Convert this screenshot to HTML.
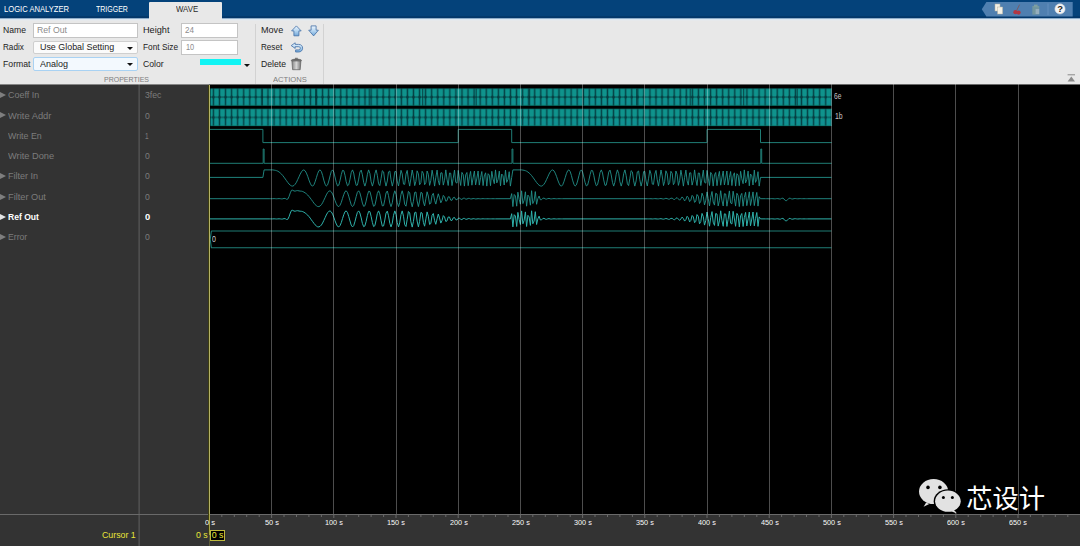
<!DOCTYPE html>
<html lang="en">
<head>
<meta charset="utf-8">
<title>Logic Analyzer</title>
<style>
*{box-sizing:border-box;margin:0;padding:0}
html,body{width:1080px;height:546px;overflow:hidden;background:#000}
body{position:relative;font-family:"Liberation Sans","Noto Sans CJK SC",sans-serif;font-size:9px;color:#1a1a1a}
.abs{position:absolute}
.t{position:absolute;line-height:1em;white-space:nowrap;transform-origin:0 50%;display:block}
.tri{position:absolute;left:0;width:0;height:0;border-top:3.3px solid transparent;border-bottom:3.3px solid transparent;border-left:6.2px solid #7e7e7e}
#topbar{left:0;top:0;width:1080px;height:18px;background:linear-gradient(#04427a 0,#04427a 16px,#033a6c 16px,#03366a 18px)}
#tabwave{left:149px;top:2px;width:73px;height:19px;background:#e8e8e8;color:#222;text-align:center;line-height:14px;border-radius:1px 1px 0 0}
#strip{left:0;top:18px;width:1080px;height:66px;background:linear-gradient(#8fadc9 0,#8fadc9 1px,#dde8f2 1px,#dde8f2 2px,#e6e9ec 2px,#e6e9ec 3px,#e8e8e8 3px)}
#edge{left:0;top:84px;width:1080px;height:1px;background:rgba(232,232,232,0.45)}
.inp{position:absolute;height:15px;background:#fff;border:1px solid #c4c4c4;font-size:9px;line-height:13px;color:#8a8a8a;padding-left:3px;white-space:nowrap}
.sel{position:absolute;height:14px;background:#fbfbfb;border:1px solid #cfcfcf;border-radius:2px;font-size:9px;line-height:12px;color:#1c1c1c;padding-left:6px;white-space:nowrap}
.sel.focus{border-color:#a9d2f3;background:#f3f9fe}
.caret{position:absolute;width:0;height:0;border-left:3px solid transparent;border-right:3px solid transparent;border-top:3px solid #111}
.vsep{position:absolute;top:24px;width:1px;height:60px;background:#d2d2d2}
#left{left:0;top:84px;width:209px;height:462px;background:#333}
#vdiv{left:138px;top:84px;width:2px;height:462px;background:linear-gradient(90deg,#454545 50%,#4e4e4e 50%)}
#axis{left:209px;top:514px;width:871px;height:32px;background:#333}
#hline{left:0;top:514px;width:1080px;height:1px;background:#6a6a6a}
.yl{position:absolute;font-size:8.8px;line-height:10px;color:#e9e638;white-space:nowrap}
#cbox{left:210px;top:529.5px;width:15px;height:11px;border:1px solid #bdb93c;background:#000;color:#e9e638;font-size:8.8px;line-height:9px;text-align:center;white-space:nowrap}
#wm{left:966.2px;top:484px;font-size:26.3px;line-height:30px;color:#fff;white-space:nowrap;font-family:"Liberation Sans","Noto Sans CJK SC",sans-serif}
</style>
</head>
<body>
<div id="topbar" class="abs"></div>

<div id="strip" class="abs"></div>
<div id="tabwave" class="abs"></div>
<div class="inp" style="left:33px;top:23px;width:105px"></div>
<div class="sel" style="left:33px;top:40.5px;width:105px;height:13.5px"><span class="caret" style="left:93px;top:5px"></span></div>
<div class="sel focus" style="left:33px;top:56.6px;width:105px;height:14.8px"><span class="caret" style="left:93px;top:5px"></span></div>
<div class="inp" style="left:181px;top:23px;width:57px"></div>
<div class="inp" style="left:181px;top:40px;width:57px"></div>
<div class="abs" style="left:200px;top:59px;width:41px;height:6px;background:#10f4f4"></div>
<div class="caret" style="left:244px;top:64px"></div>
<div class="vsep" style="left:255px"></div>
<div class="vsep" style="left:323px"></div>
<svg class="abs" style="left:286px;top:20px" width="40" height="55" viewBox="286 20 40 55">
<defs>
<linearGradient id="gb" x1="0" y1="0" x2="0" y2="1"><stop offset="0" stop-color="#eff6fd"/><stop offset="0.5" stop-color="#b6d6f1"/><stop offset="1" stop-color="#6fa6d8"/></linearGradient>
<linearGradient id="gt" x1="0" y1="0" x2="1" y2="0"><stop offset="0" stop-color="#858585"/><stop offset="0.5" stop-color="#d6d6d6"/><stop offset="1" stop-color="#767676"/></linearGradient>
</defs>
<path d="M296.4 25.9L301.2 30.9H298.9V35.8H293.9V30.9H291.6Z" fill="url(#gb)" stroke="#416fa6" stroke-width="0.8" stroke-linejoin="round"/>
<path d="M313.6 35.9L308.7 30.2H311.1V25.9H316.1V30.2H318.4Z" fill="url(#gb)" stroke="#416fa6" stroke-width="0.8" stroke-linejoin="round"/>
<path d="M291.2 45.6L295.2 42.8V44.4H298.6C301.4 44.4 302.6 46.2 302.6 48.2C302.6 50.4 301 52 298.6 52H295.6V49.9H298.3C299.6 49.9 300.3 49.2 300.3 48.2C300.3 47.2 299.6 46.7 298.3 46.7H295.2V48.4Z" fill="url(#gb)" stroke="#416fa6" stroke-width="0.8" stroke-linejoin="round"/>
<path d="M291.9 60.9H300.9L300.2 69.7H292.6Z" fill="url(#gt)" stroke="#5e5e5e" stroke-width="0.7" stroke-linejoin="round"/>
<path d="M291.2 60.6C291.2 58.6 301.6 58.6 301.6 60.6Z" fill="#6f6f6f" stroke="#555" stroke-width="0.6"/>
<rect x="295" y="57.8" width="2.8" height="1" fill="#666"/>
</svg>


<div id="left" class="abs"></div>
<i class="tri" style="top:92.0px;border-left-color:#7e7e7e"></i>
<i class="tri" style="top:112.4px;border-left-color:#7e7e7e"></i>
<i class="tri" style="top:173.2px;border-left-color:#7e7e7e"></i>
<i class="tri" style="top:193.5px;border-left-color:#7e7e7e"></i>
<i class="tri" style="top:213.8px;border-left-color:#e4e4e4"></i>
<i class="tri" style="top:234.1px;border-left-color:#7e7e7e"></i>
<div id="vdiv" class="abs"></div>
<span class="t" style="left:3.90px;top:4.87px;font-size:8.90px;color:#ffffff;transform:scaleX(0.8591)">LOGIC ANALYZER</span>
<span class="t" style="left:96.30px;top:4.87px;font-size:8.90px;color:#ffffff;transform:scaleX(0.7892)">TRIGGER</span>
<span class="t" style="left:175.70px;top:4.87px;font-size:8.90px;color:#2a2a2a;transform:scaleX(0.8841)">WAVE</span>
<span class="t" style="left:3.00px;top:26.03px;font-size:9.30px;color:#1c1c1c;transform:scaleX(0.9270)">Name</span>
<span class="t" style="left:3.00px;top:43.03px;font-size:9.30px;color:#1c1c1c;transform:scaleX(0.8747)">Radix</span>
<span class="t" style="left:3.00px;top:60.23px;font-size:9.30px;color:#1c1c1c;transform:scaleX(0.9337)">Format</span>
<span class="t" style="left:37.20px;top:26.03px;font-size:9.30px;color:#8c8c8c;transform:scaleX(0.9361)">Ref Out</span>
<span class="t" style="left:40.00px;top:43.03px;font-size:9.30px;color:#1c1c1c;transform:scaleX(0.9569)">Use Global Setting</span>
<span class="t" style="left:40.00px;top:60.23px;font-size:9.30px;color:#1c1c1c;transform:scaleX(0.9668)">Analog</span>
<span class="t" style="left:143.00px;top:26.03px;font-size:9.30px;color:#1c1c1c;transform:scaleX(0.9856)">Height</span>
<span class="t" style="left:143.00px;top:43.03px;font-size:9.30px;color:#1c1c1c;transform:scaleX(0.8910)">Font Size</span>
<span class="t" style="left:143.00px;top:60.23px;font-size:9.30px;color:#1c1c1c;transform:scaleX(0.9313)">Color</span>
<span class="t" style="left:185.20px;top:26.03px;font-size:9.30px;color:#8c8c8c;transform:scaleX(0.8703)">24</span>
<span class="t" style="left:185.60px;top:43.03px;font-size:9.30px;color:#8c8c8c;transform:scaleX(0.7929)">10</span>
<span class="t" style="left:103.70px;top:75.72px;font-size:7.90px;color:#7d7d7d;transform:scaleX(0.8881)">PROPERTIES</span>
<span class="t" style="left:260.80px;top:26.03px;font-size:9.30px;color:#1c1c1c;transform:scaleX(0.9763)">Move</span>
<span class="t" style="left:260.80px;top:43.03px;font-size:9.30px;color:#1c1c1c;transform:scaleX(0.8727)">Reset</span>
<span class="t" style="left:260.80px;top:60.23px;font-size:9.30px;color:#1c1c1c;transform:scaleX(0.9298)">Delete</span>
<span class="t" style="left:272.80px;top:75.72px;font-size:7.90px;color:#7d7d7d;transform:scaleX(0.9654)">ACTIONS</span>
<span class="t" style="left:7.90px;top:91.29px;font-size:9.00px;color:#7c7c7c;transform:scaleX(0.9982)">Coeff In</span>
<span class="t" style="left:145.00px;top:91.29px;font-size:9.00px;color:#7c7c7c;transform:scaleX(0.9641)">3fec</span>
<span class="t" style="left:7.90px;top:111.69px;font-size:9.00px;color:#7c7c7c;transform:scaleX(1.0370)">Write Addr</span>
<span class="t" style="left:145.00px;top:111.69px;font-size:9.00px;color:#7c7c7c;transform:scaleX(0.9592)">0</span>
<span class="t" style="left:7.90px;top:131.69px;font-size:9.00px;color:#7c7c7c;transform:scaleX(0.9842)">Write En</span>
<span class="t" style="left:145.00px;top:131.69px;font-size:9.00px;color:#7c7c7c;transform:scaleX(0.7194)">1</span>
<span class="t" style="left:7.90px;top:151.99px;font-size:9.00px;color:#7c7c7c;transform:scaleX(1.0279)">Write Done</span>
<span class="t" style="left:145.00px;top:151.99px;font-size:9.00px;color:#7c7c7c;transform:scaleX(0.9592)">0</span>
<span class="t" style="left:7.90px;top:172.49px;font-size:9.00px;color:#7c7c7c;transform:scaleX(1.0031)">Filter In</span>
<span class="t" style="left:145.00px;top:172.49px;font-size:9.00px;color:#7c7c7c;transform:scaleX(0.9592)">0</span>
<span class="t" style="left:7.90px;top:192.79px;font-size:9.00px;color:#7c7c7c;transform:scaleX(1.0241)">Filter Out</span>
<span class="t" style="left:145.00px;top:192.79px;font-size:9.00px;color:#7c7c7c;transform:scaleX(0.9592)">0</span>
<span class="t" style="left:7.90px;top:213.09px;font-size:9.00px;color:#ffffff;transform:scaleX(0.9508);font-weight:bold">Ref Out</span>
<span class="t" style="left:145.00px;top:213.09px;font-size:9.00px;color:#ffffff;transform:scaleX(1.0392);font-weight:bold">0</span>
<span class="t" style="left:7.90px;top:233.39px;font-size:9.00px;color:#7c7c7c;transform:scaleX(0.9601)">Error</span>
<span class="t" style="left:145.00px;top:233.39px;font-size:9.00px;color:#7c7c7c;transform:scaleX(0.9592)">0</span>

<div id="axis" class="abs"></div>
<div id="hline" class="abs"></div>
<svg class="abs" style="left:0;top:0" width="1080" height="546" viewBox="0 0 1080 546">
<defs><pattern id="bus" x="210.4" y="0" width="6.0625" height="17.4" patternUnits="userSpaceOnUse"><rect width="6.0625" height="17.4" fill="#0f938c"/><rect y="12.2" width="6.0625" height="3.2" fill="#1284a0" opacity="0.28"/><rect x="2.3" width="1.45" height="17.4" fill="#064346"/><rect y="7.9" width="6.0625" height="1.6" fill="#075659" opacity="0.8"/><path d="M3 6.2L4.5 8.7L3 11.2L1.5 8.7Z" fill="#053a3d" opacity="0.9"/><rect y="0" width="6.0625" height="0.8" fill="#0a6764" opacity="0.7"/><rect y="16.6" width="6.0625" height="0.8" fill="#0a6764" opacity="0.7"/></pattern></defs>
<g transform="translate(0 88.4)"><rect x="210.4" y="0" width="621.6" height="17.4" fill="url(#bus)"/></g>
<g transform="translate(0 108.7)"><rect x="210.4" y="0" width="621.6" height="17.4" fill="url(#bus)"/></g>
<rect x="261.7" y="88.6" width="1" height="17" fill="#042a2c" opacity="0.75"/>
<rect x="315.2" y="88.6" width="1" height="17" fill="#042a2c" opacity="0.75"/>
<rect x="368.7" y="88.6" width="1" height="17" fill="#042a2c" opacity="0.75"/>
<rect x="422.2" y="88.6" width="1" height="17" fill="#042a2c" opacity="0.75"/>
<rect x="475.7" y="88.6" width="1" height="17" fill="#042a2c" opacity="0.75"/>
<rect x="529.2" y="88.6" width="1" height="17" fill="#042a2c" opacity="0.75"/>
<rect x="582.7" y="88.6" width="1" height="17" fill="#042a2c" opacity="0.75"/>
<rect x="636.2" y="88.6" width="1" height="17" fill="#042a2c" opacity="0.75"/>
<rect x="689.7" y="88.6" width="1" height="17" fill="#042a2c" opacity="0.75"/>
<rect x="743.2" y="88.6" width="1" height="17" fill="#042a2c" opacity="0.75"/>
<rect x="796.7" y="88.6" width="1" height="17" fill="#042a2c" opacity="0.75"/>
<g fill="none" stroke-linejoin="round">
<path d="M209.4 129.4L262.9 129.4L262.9 142.6L458.2 142.6L458.2 129.4L511.7 129.4L511.7 142.6L707 142.6L707 129.4L760.5 129.4L760.5 142.6L831.6 142.6" stroke="#1f7d75" stroke-width="1"/>
<path d="M209.4 163.3L263.2 163.3L263.2 149L264.1 149L264.1 163.3L512 163.3L512 149L512.9 149L512.9 163.3L760.8 163.3L760.8 149L761.7 149L761.7 163.3L831.6 163.3" stroke="#1f7d75" stroke-width="1"/>
<path d="M209.4 177.4L262.9 177.4L264.1 169.9L271.6 169.9L272.8 169.9L274.1 170.1L275.3 170.3L276.6 170.7L277.8 171.2L279.1 172L280.3 173L281.6 174.2L282.8 175.6L284 177.2L285.3 179L286.5 180.7L287.8 182.5L289 184L290.3 185.2L291.5 185.9L292.7 186.1L294 185.5L295.2 184.2L296.5 182.2L297.7 179.6L299 176.8L300.2 174.1L301.5 171.8L302.7 170.3L303.9 169.9L305.2 170.9L306.4 173.1L307.7 176.3L308.9 179.9L310.2 183.2L311.4 185.5L312.7 186.1L313.9 184.8L315.1 181.8L316.4 177.7L317.6 173.7L318.9 170.7L320.1 169.9L321.4 171.6L322.6 175.4L323.8 180.2L325.1 184.2L326.3 186.1L327.6 184.9L328.8 181L330.1 175.8L331.3 171.4L332.6 169.9L333.8 172.1L335 177L336.3 182.5L337.5 185.9L338.8 185.1L340 180.6L341.3 174.6L342.5 170.4L343.8 170.7L345 175.3L346.2 181.7L347.5 185.8L348.7 184.8L350 179.2L351.2 172.7L352.5 169.9L353.7 173L354.9 179.9L356.2 185.4L357.4 185.1L358.7 179.1L359.9 172.1L361.2 170.1L362.4 174.9L363.7 182.5L364.9 186.1L366.1 182.2L367.4 174.3L368.6 169.9L369.9 173.5L371.1 181.7L372.4 186.1L373.6 182L374.9 173.6L376.1 169.9L377.3 175.3L378.6 183.8L379.8 185.6L381.1 178.4L382.3 170.7L383.6 171.9L384.8 180.8L386 186.1L387.3 181L388.5 171.9L389.8 171L391 179.7L392.3 186.1L393.5 181.1L394.8 171.6L396 171.5L397.2 181L398.5 186L399.7 178.8L401 170.3L402.2 173.9L403.5 184.1L404.7 184.4L406 174.1L407.2 170.4L408.4 179.6L409.7 186.1L410.9 178.5L412.2 170L413.4 175.9L414.7 185.6L415.9 181.3L417.1 170.8L418.4 173.9L419.6 184.8L420.9 182.5L422.1 171.3L423.4 173.4L424.6 184.7L425.9 182.4L427.1 171L428.3 174.3L429.6 185.4L430.8 180.7L432.1 170.2L433.3 176.7L434.6 186.1L435.8 177.4L437.1 170.1L438.3 180.8L439.5 185.1L440.8 172.9L442 172.8L443.3 185.1L444.5 180.4L445.8 169.9L447 179.3L448.2 185.5L449.5 173L450.7 173.2L452 185.6L453.2 178.5L454.5 170.1L455.7 182.3L457 183.1L458.2 170.4L459.4 178.1L460.7 185.5L461.9 172.4L463.2 174.7L464.4 186.1L465.7 174.8L466.9 172.5L468.2 185.7L469.4 176.8L470.6 171.4L471.9 185.2L473.1 177.9L474.4 171L475.6 184.9L476.9 178.1L478.1 171L479.3 185.1L480.6 177.5L481.8 171.5L483.1 185.6L484.3 175.9L485.6 172.8L486.8 186.1L488.1 173.7L489.3 175.1L490.5 185.7L491.8 171.3L493 178.7L494.3 183.7L495.5 169.9L496.8 182.9L498 179.6L499.3 171.1L500.5 185.8L501.7 174L503 175.8L504.2 185L505.5 170.1L506.7 182.4L508 179.3L509.2 171.7L510.4 186.1L511.7 177.4L512.9 169.9L520.4 169.9L521.6 169.9L522.9 170.1L524.1 170.3L525.4 170.7L526.6 171.2L527.9 172L529.1 173L530.4 174.2L531.6 175.6L532.8 177.2L534.1 179L535.3 180.7L536.6 182.5L537.8 184L539.1 185.2L540.3 185.9L541.5 186.1L542.8 185.5L544 184.2L545.3 182.2L546.5 179.6L547.8 176.8L549 174.1L550.3 171.8L551.5 170.3L552.7 169.9L554 170.9L555.2 173.1L556.5 176.3L557.7 179.9L559 183.2L560.2 185.5L561.5 186.1L562.7 184.8L563.9 181.8L565.2 177.7L566.4 173.7L567.7 170.7L568.9 169.9L570.2 171.6L571.4 175.4L572.6 180.2L573.9 184.2L575.1 186.1L576.4 184.9L577.6 181L578.9 175.8L580.1 171.4L581.4 169.9L582.6 172.1L583.8 177L585.1 182.5L586.3 185.9L587.6 185.1L588.8 180.6L590.1 174.6L591.3 170.4L592.6 170.7L593.8 175.3L595 181.7L596.3 185.8L597.5 184.8L598.8 179.2L600 172.7L601.3 169.9L602.5 173L603.7 179.9L605 185.4L606.2 185.1L607.5 179.1L608.7 172.1L610 170.1L611.2 174.9L612.5 182.5L613.7 186.1L614.9 182.2L616.2 174.3L617.4 169.9L618.7 173.5L619.9 181.7L621.2 186.1L622.4 182L623.7 173.6L624.9 169.9L626.1 175.3L627.4 183.8L628.6 185.6L629.9 178.4L631.1 170.7L632.4 171.9L633.6 180.8L634.8 186.1L636.1 181L637.3 171.9L638.6 171L639.8 179.7L641.1 186.1L642.3 181.1L643.6 171.6L644.8 171.5L646 181L647.3 186L648.5 178.8L649.8 170.3L651 173.9L652.3 184.1L653.5 184.4L654.8 174.1L656 170.4L657.2 179.6L658.5 186.1L659.7 178.5L661 170L662.2 175.9L663.5 185.6L664.7 181.3L665.9 170.8L667.2 173.9L668.4 184.8L669.7 182.5L670.9 171.3L672.2 173.4L673.4 184.7L674.7 182.4L675.9 171L677.1 174.3L678.4 185.4L679.6 180.7L680.9 170.2L682.1 176.7L683.4 186.1L684.6 177.4L685.9 170.1L687.1 180.8L688.3 185.1L689.6 172.9L690.8 172.8L692.1 185.1L693.3 180.4L694.6 169.9L695.8 179.3L697 185.5L698.3 173L699.5 173.2L700.8 185.6L702 178.5L703.3 170.1L704.5 182.3L705.8 183.1L707 170.4L708.2 178.1L709.5 185.5L710.7 172.4L712 174.7L713.2 186.1L714.5 174.8L715.7 172.5L717 185.7L718.2 176.8L719.4 171.4L720.7 185.2L721.9 177.9L723.2 171L724.4 184.9L725.7 178.1L726.9 171L728.1 185.1L729.4 177.5L730.6 171.5L731.9 185.6L733.1 175.9L734.4 172.8L735.6 186.1L736.9 173.7L738.1 175.1L739.3 185.7L740.6 171.3L741.8 178.7L743.1 183.7L744.3 169.9L745.6 182.9L746.8 179.6L748.1 171.1L749.3 185.8L750.5 174L751.8 175.8L753 185L754.3 170.1L755.5 182.4L756.8 179.3L758 171.7L759.2 186.1L760.5 177.4L831.4 177.4" stroke="#23918a" stroke-width="0.9"/>
<path d="M209.4 198.7L269.1 198.7L270.4 198.7L271.6 198.7L272.8 198.7L274.1 198.6L275.3 198.7L276.6 198.8L277.8 198.7L279.1 198.6L280.3 198.7L281.6 198.9L282.8 198.8L284 198.4L285.3 198.5L286.5 199.3L287.8 199.1L289 196.6L290.3 192.8L291.5 190.3L292.7 190.2L294 191L295.2 191.1L296.5 190.7L297.7 190.6L299 190.9L300.2 191.1L301.5 191.2L302.7 191.5L303.9 192.1L305.2 192.9L306.4 193.8L307.7 195L308.9 196.4L310.2 198L311.4 199.6L312.7 201.4L313.9 203.1L315.1 204.6L316.4 205.7L317.6 206.5L318.9 206.6L320.1 206L321.4 204.7L322.6 202.8L323.8 200.3L325.1 197.6L326.3 194.9L327.6 192.6L328.8 191.2L330.1 190.8L331.3 191.8L332.6 194L333.8 197.1L335 200.6L336.3 203.8L337.5 206L338.8 206.6L340 205.3L341.3 202.4L342.5 198.4L343.8 194.5L345 191.6L346.2 190.8L347.5 192.5L348.7 196.2L350 200.8L351.2 204.8L352.5 206.6L353.7 205.4L354.9 201.6L356.2 196.5L357.4 192.3L358.7 190.8L359.9 192.9L361.2 197.8L362.4 203.1L363.7 206.4L364.9 205.7L366.1 201.2L367.4 195.3L368.6 191.3L369.9 191.5L371.1 196.1L372.4 202.3L373.6 206.3L374.9 205.4L376.1 199.9L377.3 193.5L378.6 190.8L379.8 193.8L381.1 200.5L382.3 205.9L383.6 205.6L384.8 199.8L386 193L387.3 191L388.5 195.6L389.8 203.1L391 206.6L392.3 202.8L393.5 195.1L394.8 190.8L396 194.3L397.2 202.2L398.5 206.6L399.7 202.7L401 194.4L402.2 190.8L403.5 196L404.7 204.4L406 206.2L407.2 199.1L408.4 191.4L409.7 192.7L410.9 201.6L412.2 206.8L413.4 201.4L414.7 192.4L415.9 192L417.1 200.8L418.4 206.6L419.6 201.1L420.9 192.3L422.1 193L423.4 202.1L424.6 205.9L425.9 198.6L427.1 191.8L428.3 196L429.6 204.2L430.8 203.2L432.1 195.1L433.3 193.3L434.6 200.4L435.8 204.1L437.1 198.5L438.3 193.8L439.5 197.7L440.8 202.8L442 200.3L443.3 195.4L444.5 196.8L445.8 201.2L447 200.7L448.2 196.8L449.5 196.9L450.7 200.1L452 200.3L453.2 197.7L454.5 197.3L455.7 199.5L457 199.8L458.2 198.1L459.4 197.8L460.7 199.2L461.9 199.4L463.2 198.3L464.4 198.2L465.7 199L466.9 199.1L468.2 198.4L469.4 198.4L470.6 198.9L471.9 198.9L473.1 198.5L474.4 198.6L475.6 198.9L476.9 198.8L478.1 198.6L479.3 198.7L480.6 198.8L481.8 198.7L483.1 198.6L484.3 198.7L485.6 198.7L486.8 198.7L488.1 198.7L489.3 198.7L490.5 198.7L491.8 198.7L493 198.7L494.3 198.7L495.5 198.7L510.4 198.7L511.7 193.6L512.9 206.6L514.2 194.5L515.4 195.9L516.7 206.2L517.9 192.2L519.2 199.4L520.4 204.2L521.6 190.8L522.9 203.6L524.1 200.3L525.4 191.8L526.6 206.2L527.9 195.1L529.1 196.8L530.4 205.2L531.6 190.7L532.8 203.6L534.1 200.8L535.3 191.6L536.6 204.3L537.8 198.7L539.1 196L540.3 199.7L541.5 199.7L542.8 198.3L544 198.1L545.3 198.9L546.5 199.1L547.8 198.6L549 198.4L550.3 198.8L551.5 198.9L552.7 198.7L554 198.6L555.2 198.7L556.5 198.8L557.7 198.7L559 198.7L560.2 198.7L561.5 198.7L562.7 198.7L643.6 198.7L644.8 198.7L646 198.7L647.3 198.7L648.5 198.7L649.8 198.7L651 198.7L652.3 198.8L653.5 198.7L654.8 198.6L656 198.7L657.2 198.8L658.5 198.8L659.7 198.6L661 198.5L662.2 198.8L663.5 199L664.7 198.7L665.9 198.3L667.2 198.6L668.4 199.1L669.7 199L670.9 198.2L672.2 198.2L673.4 199.2L674.7 199.5L675.9 198.3L677.1 197.6L678.4 198.9L679.6 200.2L680.9 198.7L682.1 196.9L683.4 198.4L684.6 200.9L685.9 199.4L687.1 196.2L688.3 197.5L689.6 201.6L690.8 200.3L692.1 195.4L693.3 196.7L694.6 202.4L695.8 201.1L697 194.5L698.3 196.2L699.5 203.5L700.8 201.2L702 193.2L703.3 196.5L704.5 204.9L705.8 200.2L707 191.9L708.2 198.4L709.5 205.9L710.7 197.4L712 191.5L713.2 202L714.5 205.1L715.7 193.3L717 194L718.2 205.9L719.4 200.7L720.7 190.7L721.9 200.2L723.2 206L724.4 193.7L725.7 194L726.9 206.2L728.1 199.2L729.4 190.9L730.6 202.9L731.9 203.7L733.1 191.2L734.4 198.8L735.6 206.1L736.9 193.3L738.1 195.5L739.3 206.6L740.6 195.6L741.8 193.4L743.1 206.2L744.3 197.5L745.6 192.3L746.8 205.7L748.1 198.6L749.3 191.8L750.5 205.5L751.8 198.8L753 191.9L754.3 205.6L755.5 198.2L756.8 192.4L758 206.1L759.2 196.7L760.5 198.7L765.5 198.7L766.7 198.7L768 198.7L769.2 198.8L770.4 198.7L771.7 198.6L772.9 198.7L774.2 198.8L775.4 198.8L776.7 198.6L777.9 198.6L779.2 198.9L780.4 199L781.6 198.4L782.9 198.2L784.1 199.1L785.4 200.6L786.6 200.7L787.9 199.4L789.1 198.2L790.3 198.3L791.6 198.9L792.8 199L794.1 198.6L795.3 198.5L796.6 198.7L797.8 198.8L799.1 198.7L800.3 198.6L801.5 198.7L802.8 198.7L804 198.7L805.3 198.7L806.5 198.7L807.8 198.7L831.4 198.7" stroke="#23918a" stroke-width="0.9"/>
<path d="M209.4 218.9L269.1 218.9L270.4 218.9L271.6 218.9L272.8 218.9L274.1 218.8L275.3 218.9L276.6 219L277.8 218.9L279.1 218.8L280.3 218.9L281.6 219.1L282.8 219L284 218.6L285.3 218.7L286.5 219.5L287.8 219.3L289 216.8L290.3 213L291.5 210.4L292.7 210.3L294 211.1L295.2 211.2L296.5 210.8L297.7 210.7L299 211L300.2 211.2L301.5 211.3L302.7 211.6L303.9 212.2L305.2 213L306.4 214L307.7 215.1L308.9 216.5L310.2 218.1L311.4 219.9L312.7 221.6L313.9 223.3L315.1 224.8L316.4 226L317.6 226.8L318.9 226.9L320.1 226.3L321.4 225L322.6 223L323.8 220.5L325.1 217.7L326.3 215L327.6 212.7L328.8 211.3L330.1 210.9L331.3 211.9L332.6 214.1L333.8 217.2L335 220.8L336.3 224L337.5 226.3L338.8 226.9L340 225.6L341.3 222.6L342.5 218.6L343.8 214.6L345 211.7L346.2 210.9L347.5 212.6L348.7 216.4L350 221L351.2 225.1L352.5 226.9L353.7 225.7L354.9 221.8L356.2 216.7L357.4 212.4L358.7 210.9L359.9 213L361.2 217.9L362.4 223.4L363.7 226.7L364.9 225.9L366.1 221.5L367.4 215.5L368.6 211.4L369.9 211.6L371.1 216.3L372.4 222.6L373.6 226.6L374.9 225.6L376.1 220.1L377.3 213.7L378.6 210.9L379.8 214L381.1 220.8L382.3 226.2L383.6 225.9L384.8 220L386 213.1L387.3 211.1L388.5 215.8L389.8 223.3L391 226.9L392.3 223.1L393.5 215.3L394.8 210.9L396 214.4L397.2 222.5L398.5 226.9L399.7 222.9L401 214.6L402.2 210.9L403.5 216.2L404.7 224.7L406 226.5L407.2 219.3L408.4 211.5L409.7 212.9L410.9 221.8L412.2 227.1L413.4 221.6L414.7 212.6L415.9 212.1L417.1 221L418.4 226.9L419.6 221.4L420.9 212.4L422.1 213.1L423.4 222.4L424.6 226.2L425.9 218.8L427.1 211.9L428.3 216.2L429.6 224.5L430.8 223.5L432.1 215.2L433.3 213.5L434.6 220.6L435.8 224.3L437.1 218.7L438.3 214L439.5 217.9L440.8 223.1L442 220.6L443.3 215.6L444.5 216.9L445.8 221.5L447 220.9L448.2 217L449.5 217L450.7 220.3L452 220.5L453.2 217.9L454.5 217.5L455.7 219.7L457 220L458.2 218.3L459.4 218L460.7 219.4L461.9 219.6L463.2 218.5L464.4 218.4L465.7 219.2L466.9 219.3L468.2 218.6L469.4 218.6L470.6 219.1L471.9 219.1L473.1 218.7L474.4 218.8L475.6 219.1L476.9 219L478.1 218.8L479.3 218.9L480.6 219L481.8 218.9L483.1 218.8L484.3 218.9L485.6 218.9L486.8 218.9L488.1 218.9L489.3 218.9L490.5 218.9L491.8 218.9L493 218.9L494.3 218.9L495.5 218.9L510.4 218.9L511.7 213.7L512.9 226.9L514.2 214.7L515.4 216L516.7 226.5L517.9 212.4L519.2 219.6L520.4 224.5L521.6 210.9L522.9 223.8L524.1 220.5L525.4 211.9L526.6 226.5L527.9 215.3L529.1 216.9L530.4 225.4L531.6 210.8L532.8 223.8L534.1 221L535.3 211.7L536.6 224.5L537.8 218.9L539.1 216.1L540.3 219.9L541.5 219.9L542.8 218.5L544 218.3L545.3 219.1L546.5 219.3L547.8 218.8L549 218.6L550.3 219L551.5 219.1L552.7 218.9L554 218.8L555.2 218.9L556.5 219L557.7 218.9L559 218.9L560.2 218.9L561.5 218.9L562.7 218.9L643.6 218.9L644.8 218.9L646 218.9L647.3 218.9L648.5 218.9L649.8 218.9L651 218.9L652.3 219L653.5 218.9L654.8 218.8L656 218.9L657.2 219L658.5 219L659.7 218.8L661 218.7L662.2 219L663.5 219.2L664.7 218.9L665.9 218.5L667.2 218.8L668.4 219.3L669.7 219.2L670.9 218.4L672.2 218.4L673.4 219.4L674.7 219.7L675.9 218.5L677.1 217.8L678.4 219.1L679.6 220.4L680.9 218.9L682.1 217.1L683.4 218.6L684.6 221.1L685.9 219.6L687.1 216.3L688.3 217.7L689.6 221.9L690.8 220.5L692.1 215.5L693.3 216.8L694.6 222.7L695.8 221.3L697 214.6L698.3 216.3L699.5 223.8L700.8 221.5L702 213.4L703.3 216.7L704.5 225.1L705.8 220.4L707 212L708.2 218.6L709.5 226.2L710.7 217.6L712 211.6L713.2 222.2L714.5 225.4L715.7 213.5L717 214.1L718.2 226.1L719.4 220.9L720.7 210.8L721.9 220.4L723.2 226.3L724.4 213.8L725.7 214.1L726.9 226.5L728.1 219.4L729.4 211L730.6 223.2L731.9 224L733.1 211.3L734.4 219L735.6 226.3L736.9 213.4L738.1 215.6L739.3 226.9L740.6 215.8L741.8 213.5L743.1 226.5L744.3 217.7L745.6 212.4L746.8 226L748.1 218.8L749.3 212L750.5 225.8L751.8 219L753 212L754.3 225.9L755.5 218.4L756.8 212.5L758 226.4L759.2 216.9L760.5 218.9L765.5 218.9L766.7 218.9L768 218.9L769.2 219L770.4 218.9L771.7 218.8L772.9 218.9L774.2 219L775.4 219L776.7 218.8L777.9 218.8L779.2 219.1L780.4 219.2L781.6 218.6L782.9 218.4L784.1 219.3L785.4 220.8L786.6 220.9L787.9 219.6L789.1 218.4L790.3 218.5L791.6 219.1L792.8 219.2L794.1 218.8L795.3 218.7L796.6 218.9L797.8 219L799.1 218.9L800.3 218.8L801.5 218.9L802.8 218.9L804 218.9L805.3 218.9L806.5 218.9L807.8 218.9L831.4 218.9" stroke="#2fb3ac" stroke-width="1"/>
<path d="M210.2 239.4L211.4 231H831.4M210.2 239.4L211.4 247.8H831.4" stroke="#1f7d75" stroke-width="1.1"/>
</g>
<rect x="208.9" y="514" width="1" height="4" fill="#6a6a6a"/>
<rect x="221.3" y="514" width="1" height="3" fill="#6a6a6a"/>
<rect x="233.8" y="514" width="1" height="3" fill="#6a6a6a"/>
<rect x="246.2" y="514" width="1" height="3" fill="#6a6a6a"/>
<rect x="258.7" y="514" width="1" height="3" fill="#6a6a6a"/>
<rect x="271.1" y="514" width="1" height="4" fill="#6a6a6a"/>
<rect x="283.5" y="514" width="1" height="3" fill="#6a6a6a"/>
<rect x="296.0" y="514" width="1" height="3" fill="#6a6a6a"/>
<rect x="308.4" y="514" width="1" height="3" fill="#6a6a6a"/>
<rect x="320.9" y="514" width="1" height="3" fill="#6a6a6a"/>
<rect x="333.3" y="514" width="1" height="4" fill="#6a6a6a"/>
<rect x="345.7" y="514" width="1" height="3" fill="#6a6a6a"/>
<rect x="358.2" y="514" width="1" height="3" fill="#6a6a6a"/>
<rect x="370.6" y="514" width="1" height="3" fill="#6a6a6a"/>
<rect x="383.1" y="514" width="1" height="3" fill="#6a6a6a"/>
<rect x="395.5" y="514" width="1" height="4" fill="#6a6a6a"/>
<rect x="407.9" y="514" width="1" height="3" fill="#6a6a6a"/>
<rect x="420.4" y="514" width="1" height="3" fill="#6a6a6a"/>
<rect x="432.8" y="514" width="1" height="3" fill="#6a6a6a"/>
<rect x="445.3" y="514" width="1" height="3" fill="#6a6a6a"/>
<rect x="457.7" y="514" width="1" height="4" fill="#6a6a6a"/>
<rect x="470.1" y="514" width="1" height="3" fill="#6a6a6a"/>
<rect x="482.6" y="514" width="1" height="3" fill="#6a6a6a"/>
<rect x="495.0" y="514" width="1" height="3" fill="#6a6a6a"/>
<rect x="507.5" y="514" width="1" height="3" fill="#6a6a6a"/>
<rect x="519.9" y="514" width="1" height="4" fill="#6a6a6a"/>
<rect x="532.3" y="514" width="1" height="3" fill="#6a6a6a"/>
<rect x="544.8" y="514" width="1" height="3" fill="#6a6a6a"/>
<rect x="557.2" y="514" width="1" height="3" fill="#6a6a6a"/>
<rect x="569.7" y="514" width="1" height="3" fill="#6a6a6a"/>
<rect x="582.1" y="514" width="1" height="4" fill="#6a6a6a"/>
<rect x="594.5" y="514" width="1" height="3" fill="#6a6a6a"/>
<rect x="607.0" y="514" width="1" height="3" fill="#6a6a6a"/>
<rect x="619.4" y="514" width="1" height="3" fill="#6a6a6a"/>
<rect x="631.9" y="514" width="1" height="3" fill="#6a6a6a"/>
<rect x="644.3" y="514" width="1" height="4" fill="#6a6a6a"/>
<rect x="656.7" y="514" width="1" height="3" fill="#6a6a6a"/>
<rect x="669.2" y="514" width="1" height="3" fill="#6a6a6a"/>
<rect x="681.6" y="514" width="1" height="3" fill="#6a6a6a"/>
<rect x="694.1" y="514" width="1" height="3" fill="#6a6a6a"/>
<rect x="706.5" y="514" width="1" height="4" fill="#6a6a6a"/>
<rect x="718.9" y="514" width="1" height="3" fill="#6a6a6a"/>
<rect x="731.4" y="514" width="1" height="3" fill="#6a6a6a"/>
<rect x="743.8" y="514" width="1" height="3" fill="#6a6a6a"/>
<rect x="756.3" y="514" width="1" height="3" fill="#6a6a6a"/>
<rect x="768.7" y="514" width="1" height="4" fill="#6a6a6a"/>
<rect x="781.1" y="514" width="1" height="3" fill="#6a6a6a"/>
<rect x="793.6" y="514" width="1" height="3" fill="#6a6a6a"/>
<rect x="806.0" y="514" width="1" height="3" fill="#6a6a6a"/>
<rect x="818.5" y="514" width="1" height="3" fill="#6a6a6a"/>
<rect x="830.9" y="514" width="1" height="4" fill="#6a6a6a"/>
<rect x="843.3" y="514" width="1" height="3" fill="#6a6a6a"/>
<rect x="855.8" y="514" width="1" height="3" fill="#6a6a6a"/>
<rect x="868.2" y="514" width="1" height="3" fill="#6a6a6a"/>
<rect x="880.7" y="514" width="1" height="3" fill="#6a6a6a"/>
<rect x="893.1" y="514" width="1" height="4" fill="#6a6a6a"/>
<rect x="905.5" y="514" width="1" height="3" fill="#6a6a6a"/>
<rect x="918.0" y="514" width="1" height="3" fill="#6a6a6a"/>
<rect x="930.4" y="514" width="1" height="3" fill="#6a6a6a"/>
<rect x="942.9" y="514" width="1" height="3" fill="#6a6a6a"/>
<rect x="955.3" y="514" width="1" height="4" fill="#6a6a6a"/>
<rect x="967.7" y="514" width="1" height="3" fill="#6a6a6a"/>
<rect x="980.2" y="514" width="1" height="3" fill="#6a6a6a"/>
<rect x="992.6" y="514" width="1" height="3" fill="#6a6a6a"/>
<rect x="1005.1" y="514" width="1" height="3" fill="#6a6a6a"/>
<rect x="1017.5" y="514" width="1" height="4" fill="#6a6a6a"/>
<rect x="1029.9" y="514" width="1" height="3" fill="#6a6a6a"/>
<rect x="1042.4" y="514" width="1" height="3" fill="#6a6a6a"/>
<rect x="1054.8" y="514" width="1" height="3" fill="#6a6a6a"/>
<rect x="1067.3" y="514" width="1" height="3" fill="#6a6a6a"/>
<rect x="271" y="84" width="1" height="430" fill="#fff" fill-opacity="0.3"/>
<rect x="333" y="84" width="1" height="430" fill="#fff" fill-opacity="0.3"/>
<rect x="396" y="84" width="1" height="430" fill="#fff" fill-opacity="0.3"/>
<rect x="458" y="84" width="1" height="430" fill="#fff" fill-opacity="0.3"/>
<rect x="520" y="84" width="1" height="430" fill="#fff" fill-opacity="0.3"/>
<rect x="582" y="84" width="1" height="430" fill="#fff" fill-opacity="0.3"/>
<rect x="644" y="84" width="1" height="430" fill="#fff" fill-opacity="0.3"/>
<rect x="707" y="84" width="1" height="430" fill="#fff" fill-opacity="0.3"/>
<rect x="769" y="84" width="1" height="430" fill="#fff" fill-opacity="0.3"/>
<rect x="831" y="84" width="1" height="430" fill="#fff" fill-opacity="0.3"/>
<rect x="893" y="84" width="1" height="430" fill="#fff" fill-opacity="0.3"/>
<rect x="955" y="84" width="1" height="430" fill="#fff" fill-opacity="0.3"/>
<rect x="1018" y="84" width="1" height="430" fill="#fff" fill-opacity="0.3"/>
<rect x="208" y="85" width="1" height="450" fill="#3d3d10"/>
<rect x="209" y="85" width="1" height="429" fill="#b4b266"/>
<rect x="209" y="514" width="1" height="21" fill="#a8a548"/>
<rect x="209" y="535" width="1" height="11" fill="#5a5936"/>
</svg>
<div id="edge" class="abs"></div>
<span class="t" style="left:204.50px;top:519.12px;font-size:7.90px;color:#fafafa;transform:scaleX(0.9679)">0 s</span>
<span class="t" style="left:264.80px;top:519.12px;font-size:7.90px;color:#fafafa;transform:scaleX(0.9376)">50 s</span>
<span class="t" style="left:325.10px;top:519.12px;font-size:7.90px;color:#fafafa;transform:scaleX(0.9212)">100 s</span>
<span class="t" style="left:387.30px;top:519.12px;font-size:7.90px;color:#fafafa;transform:scaleX(0.9212)">150 s</span>
<span class="t" style="left:449.50px;top:519.12px;font-size:7.90px;color:#fafafa;transform:scaleX(0.9212)">200 s</span>
<span class="t" style="left:511.70px;top:519.12px;font-size:7.90px;color:#fafafa;transform:scaleX(0.9212)">250 s</span>
<span class="t" style="left:573.90px;top:519.12px;font-size:7.90px;color:#fafafa;transform:scaleX(0.9212)">300 s</span>
<span class="t" style="left:636.10px;top:519.12px;font-size:7.90px;color:#fafafa;transform:scaleX(0.9212)">350 s</span>
<span class="t" style="left:698.30px;top:519.12px;font-size:7.90px;color:#fafafa;transform:scaleX(0.9212)">400 s</span>
<span class="t" style="left:760.50px;top:519.12px;font-size:7.90px;color:#fafafa;transform:scaleX(0.9212)">450 s</span>
<span class="t" style="left:822.70px;top:519.12px;font-size:7.90px;color:#fafafa;transform:scaleX(0.9212)">500 s</span>
<span class="t" style="left:884.90px;top:519.12px;font-size:7.90px;color:#fafafa;transform:scaleX(0.9212)">550 s</span>
<span class="t" style="left:947.10px;top:519.12px;font-size:7.90px;color:#fafafa;transform:scaleX(0.9212)">600 s</span>
<span class="t" style="left:1009.30px;top:519.12px;font-size:7.90px;color:#fafafa;transform:scaleX(0.9212)">650 s</span>
<span class="t" style="left:834.40px;top:92.96px;font-size:8.20px;color:#c4c4c4;transform:scaleX(0.8115)">6e</span>
<span class="t" style="left:834.90px;top:113.16px;font-size:8.20px;color:#c4c4c4;transform:scaleX(0.8444)">1b</span>
<span class="t" style="left:212.00px;top:234.82px;font-size:8.60px;color:#d4d4d4;transform:scaleX(0.8156)">0</span>
<div class="yl" style="left:102px;top:529.5px">Cursor 1</div>
<div class="yl" style="left:196px;top:529.5px">0 s</div>
<div id="cbox" class="abs">0 s</div>
<svg class="abs" style="left:915px;top:475px" width="50" height="42" viewBox="915 475 50 42">
<path d="M926.2 502.6L923.6 506.8L929.2 503.9Z" fill="#e2e2e2"/>
<ellipse cx="933.6" cy="491.6" rx="14.6" ry="12.5" fill="#e2e2e2"/>
<ellipse cx="947.9" cy="501.2" rx="14.2" ry="12" fill="#000"/>
<path d="M953.4 509.6L957 513.6L950.4 510.9Z" fill="#e2e2e2"/>
<ellipse cx="947.9" cy="501.2" rx="12.8" ry="10.6" fill="#e2e2e2"/>
<circle cx="928" cy="487.4" r="1.8" fill="#000"/><circle cx="939.9" cy="487.4" r="1.8" fill="#000"/>
<circle cx="943.4" cy="497.5" r="1.5" fill="#000"/><circle cx="952.4" cy="497.5" r="1.5" fill="#000"/>
</svg>
<div id="wm" class="abs">芯设计</div>
<svg class="abs" style="left:975px;top:0" width="105" height="19" viewBox="975 0 105 19">
<path d="M981.8 9.2L986.4 1.9H1072.7V16.6H986.4Z" fill="#4f7fb0"/>
<rect x="995" y="4" width="5" height="7" fill="#f4f1e6" stroke="#b9b4a2" stroke-width="0.5"/>
<rect x="997.6" y="7" width="5" height="7" fill="#f4f1e6" stroke="#b9b4a2" stroke-width="0.5"/>
<path d="M1019.6 4.6L1016.6 10.6" stroke="#7a5a66" stroke-width="1" fill="none"/>
<circle cx="1015.4" cy="12.2" r="2.1" fill="#b23744"/><circle cx="1018.6" cy="12.6" r="2.1" fill="#b23744"/>
<rect x="1032.3" y="6" width="7" height="8.6" fill="#7f9f9a" opacity="0.75"/>
<rect x="1034" y="4.6" width="3.6" height="2" fill="#8aa7a0" opacity="0.8"/>
<rect x="1035.6" y="9" width="3.6" height="5" fill="#9db4c6" opacity="0.8"/>
<rect x="1047.6" y="3.5" width="0.8" height="11.5" fill="#6a95c2"/>
<circle cx="1060" cy="8.9" r="5.1" fill="#f3f3f3" stroke="#c9d3de" stroke-width="0.6"/>
<text x="1060" y="12.2" font-family="Liberation Sans, sans-serif" font-weight="bold" font-size="9.4" text-anchor="middle" fill="#222">?</text>
<path d="M1067.6 74.5H1075" stroke="#808080"/>
</svg>
<svg class="abs" style="left:1066px;top:73px" width="11" height="10" viewBox="1066 73 11 10">
<rect x="1067.6" y="74.3" width="7.4" height="1" fill="#8a8a8a"/>
<path d="M1071.3 76.6L1075 81.6H1067.6Z" fill="#8a8a8a"/>
</svg>

</body>
</html>
